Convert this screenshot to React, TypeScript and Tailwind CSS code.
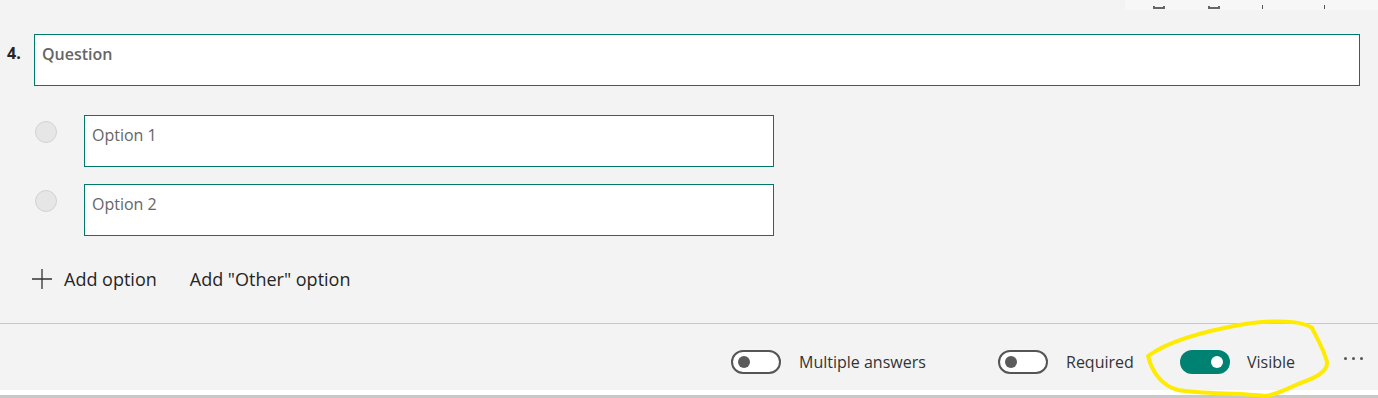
import React from "react";

const font = { fontFamily: '"Segoe UI", "Open Sans", "Noto Sans", sans-serif' };

function Toggle({ on }: { on?: boolean }) {
  return on ? (
    <div className="w-[50px] h-[24px] rounded-full bg-[#008272] flex items-center justify-end pr-[7px] shrink-0">
      <div className="w-[12px] h-[12px] rounded-full bg-white" />
    </div>
  ) : (
    <div className="w-[50px] h-[24px] rounded-full border-2 border-[#555] bg-white flex items-center pl-[5px] shrink-0">
      <div className="w-[12px] h-[12px] rounded-full bg-[#5b5b5b]" />
    </div>
  );
}

function OptionRow({ label }: { label: string }) {
  return (
    <div className="flex items-start">
      <div className="w-[22px] h-[22px] rounded-full bg-[#e6e6e6] border border-[#d2d2d2] ml-[35px] mt-[6px] shrink-0" />
      <div className="ml-[27px] w-[690px] h-[52px] bg-white border border-[#00786a] pl-[7px] pt-[7px] text-[16px] text-[#666]">
        {label}
      </div>
    </div>
  );
}

export default function App() {
  return (
    <div className="relative w-[1378px] h-[398px] bg-[#f3f3f3] overflow-hidden" style={font}>
      <div className="h-[34px] flex justify-end">
        <div className="w-[253px] h-[10px] bg-[#f7f7f7] relative">
          <div className="absolute left-[28px] bottom-[1px] w-[12px] h-[3px] border-b-2 border-x-2 border-[#666]" />
          <div className="absolute left-[83px] bottom-[1px] w-[12px] h-[3px] border-b-2 border-x-2 border-[#666]" />
          <div className="absolute left-[137px] bottom-[1px] w-[1px] h-[4px] bg-[#555]" />
          <div className="absolute left-[199px] bottom-[1px] w-[1px] h-[4px] bg-[#555]" />
        </div>
      </div>

      <div className="flex items-start">
        <div className="w-[34px] pl-[7px] pt-[9px] text-[16px] font-bold text-[#252525] leading-[20px]">4.</div>
        <div className="w-[1326px] h-[52px] bg-white border border-[#00786a] pl-[7px] pt-[9px] text-[16px] font-semibold text-[#666] leading-[20px]">
          Question
        </div>
      </div>

      <div className="mt-[29px] flex flex-col gap-[17px]">
        <OptionRow label="Option 1" />
        <OptionRow label="Option 2" />
      </div>

      <div className="mt-[31px] flex items-center h-[24px] text-[18px] text-[#252525]">
        <svg width="22" height="22" viewBox="0 0 22 22" className="ml-[31px]">
          <path d="M11 1v20M1 11h20" stroke="#333" strokeWidth="1.3" />
        </svg>
        <span className="ml-[11px]">Add option</span>
        <span className="ml-[33px]">Add "Other" option</span>
      </div>

      <div className="mt-[32px] border-t border-[#c8c8c8]" />

      <div className="h-[66px] flex items-center justify-end pt-[10px] text-[16px] text-[#333]">
        <Toggle />
        <span className="ml-[18px] w-[199px] shrink-0">Multiple answers</span>
        <Toggle />
        <span className="ml-[18px] w-[114px] shrink-0">Required</span>
        <Toggle on />
        <span className="ml-[17px] w-[97px] shrink-0">Visible</span>
        <div className="flex gap-[5px] mr-[15px] mb-[8px]">
          <div className="w-[3px] h-[3px] rounded-full bg-[#555]" />
          <div className="w-[3px] h-[3px] rounded-full bg-[#555]" />
          <div className="w-[3px] h-[3px] rounded-full bg-[#555]" />
        </div>
      </div>

      <div className="h-[5px] bg-white" />
      <div className="h-[3px] bg-[#c8c8c8]" />

      <svg className="absolute left-0 top-0 pointer-events-none" width="1378" height="398">
        <path
          d="M1148 356 C1170 340 1210 330 1245 324 C1275 320 1300 320 1312 328 C1318 340 1324 350 1327 362 C1328 372 1315 378 1298 384 C1285 390 1275 395 1265 396 C1240 393 1200 394 1178 390 C1162 386 1152 372 1148 356 Z"
          fill="none"
          stroke="#ffeb00"
          strokeWidth="4"
          strokeLinejoin="round"
        />
      </svg>
    </div>
  );
}
